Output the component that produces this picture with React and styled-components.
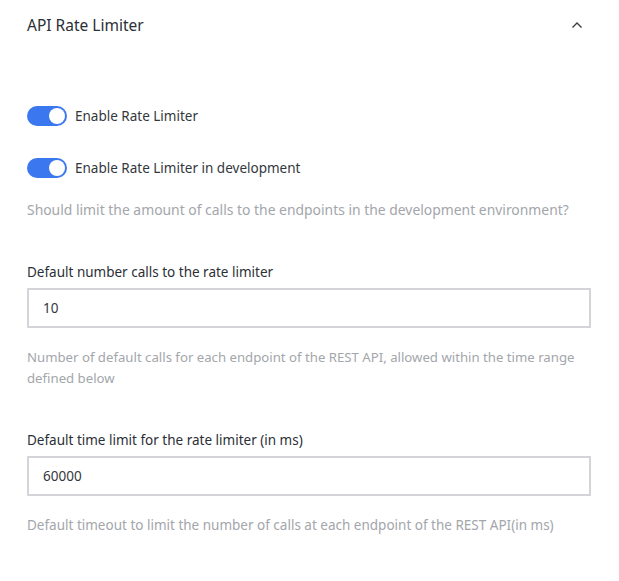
import React from "react";
import styled, { createGlobalStyle } from "styled-components";

const GlobalStyle = createGlobalStyle`
    body {
        margin: 0;
        background: #ffffff;
        font-family: "Noto Sans", "Open Sans", sans-serif;
    }
`;

const Panel = styled.section`
    width: 619px;
    height: 581px;
    box-sizing: border-box;
    padding: 0 28px 0 27px;
    background: #ffffff;
`;

const Header = styled.div`
    height: 50px;
    display: flex;
    justify-content: space-between;
    align-items: center;
`;

const Title = styled.h2`
    margin: 0;
    font-size: 15.5px;
    font-weight: 400;
    color: #2b2f36;
`;

const Chevron = styled.button`
    width: 16px;
    height: 16px;
    margin-right: 6px;
    padding: 0;
    border: none;
    background: none;
    display: flex;
    align-items: center;
    justify-content: center;
`;

const Body = styled.div`
    padding-top: 56px;
    display: flex;
    flex-direction: column;
`;

const ToggleRow = styled.label`
    display: flex;
    align-items: center;
    gap: 8px;
    height: 20px;
    margin-bottom: ${(p) => p.$gap}px;
`;

const Track = styled.span`
    position: relative;
    width: 40px;
    height: 20px;
    border-radius: 10px;
    background: #3b78f0;
    flex-shrink: 0;
`;

const Knob = styled.span`
    position: absolute;
    top: 2px;
    right: 2px;
    width: 16px;
    height: 16px;
    border-radius: 50%;
    background: #ffffff;
`;

const ToggleText = styled.span`
    font-size: 13.5px;
    color: #33373d;
`;

const Hint = styled.p`
    margin: 0;
    font-size: ${(p) => p.$size || 13.5}px;
    line-height: 21px;
    color: #a3a6ab;
`;

const Field = styled.div`
    display: flex;
    flex-direction: column;
    margin-top: ${(p) => p.$top}px;
`;

const FieldLabel = styled.label`
    font-size: 13.5px;
    line-height: 20px;
    color: #2b2f36;
    margin-bottom: 6px;
`;

const Input = styled.input`
    box-sizing: border-box;
    width: 100%;
    height: 40px;
    border: 2px solid #d3d5d8;
    padding: 0 14px;
    font-family: inherit;
    font-size: 13.5px;
    color: #33373d;
    outline: none;
    margin-bottom: 19px;
`;

function Toggle({ label, gap }) {
    return (
        <ToggleRow $gap={gap}>
            <Track>
                <Knob />
            </Track>
            <ToggleText>{label}</ToggleText>
        </ToggleRow>
    );
}

export default function App() {
    return (
        <Panel>
            <GlobalStyle />
            <Header>
                <Title>API Rate Limiter</Title>
                <Chevron aria-label="collapse">
                    <svg width="12" height="8" viewBox="0 0 12 8">
                        <path
                            d="M1.5 6.5 L6 2 L10.5 6.5"
                            fill="none"
                            stroke="#3a3e45"
                            strokeWidth="1.4"
                        />
                    </svg>
                </Chevron>
            </Header>
            <Body>
                <Toggle label="Enable Rate Limiter" gap={32} />
                <Toggle label="Enable Rate Limiter in development" gap={21} />
                <Hint $size={13.9}>
                    Should limit the amount of calls to the endpoints in the
                    development environment?
                </Hint>
                <Field $top={42}>
                    <FieldLabel>Default number calls to the rate limiter</FieldLabel>
                    <Input defaultValue="10" />
                    <Hint $size={13.2}>
                        Number of default calls for each endpoint of the REST
                        API, allowed within the time range defined below
                    </Hint>
                </Field>
                <Field $top={41}>
                    <FieldLabel>
                        Default time limit for the rate limiter (in ms)
                    </FieldLabel>
                    <Input defaultValue="60000" />
                    <Hint>
                        Default timeout to limit the number of calls at each
                        endpoint of the REST API(in ms)
                    </Hint>
                </Field>
            </Body>
        </Panel>
    );
}
